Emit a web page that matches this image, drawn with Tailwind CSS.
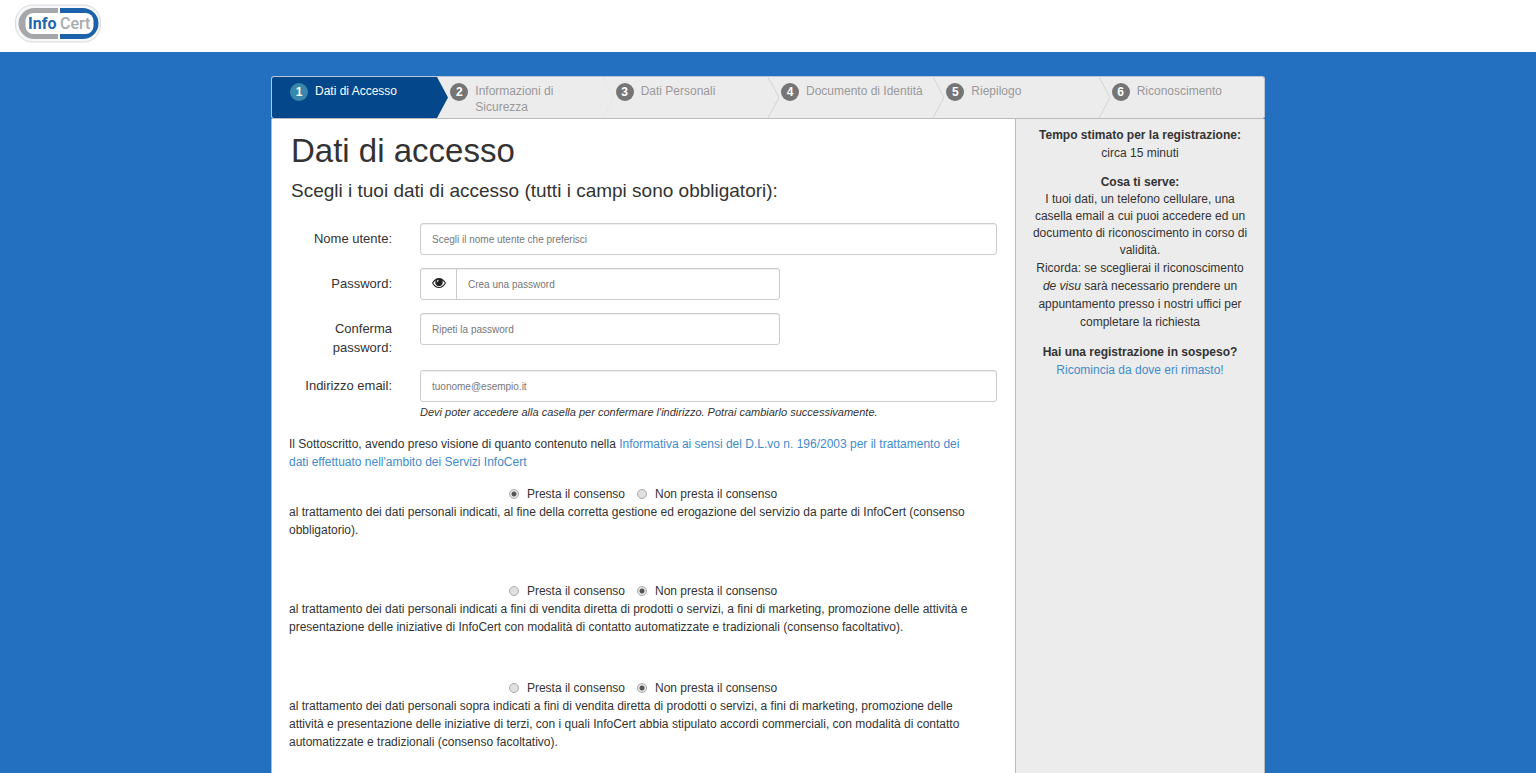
<!DOCTYPE html>
<html lang="it">
<head>
<meta charset="utf-8">
<meta name="viewport" content="width=device-width, initial-scale=1">
<title>InfoCert - Dati di accesso</title>
<script src="https://cdn.jsdelivr.net/npm/@tailwindcss/browser@4"></script>
</head>
<body class="flex min-h-screen flex-col overflow-x-hidden bg-[#2370c1] font-['Liberation_Sans',Arial,sans-serif] text-[#333]">
<header class="flex h-[52px] items-start bg-white px-[14px] pt-1">
  <a href="#" aria-label="InfoCert">
    <svg class="h-[39px] w-[88px]" viewBox="0 0 88 39">
      <rect x="1.500" y="1" width="85" height="37" rx="17" fill="#f6f7f8" stroke="#d9dadc"/>
      <path d="M44 4H20.500a16 15.500 0 0 0 0 31H44z" fill="#a5a7aa"/>
      <path d="M46 4h22.500a16 15.500 0 0 1 0 31H46z" fill="#1b62aa"/>
      <rect x="11.500" y="9" width="68" height="21" rx="8" fill="#fff"/>
      <rect x="44" y="4" width="2" height="31" fill="#fff"/>
      <text x="14" y="25" font-family="Roboto, sans-serif" font-size="16" font-weight="700" fill="#1f68b0">Info</text>
      <text x="46" y="25" font-family="Roboto, sans-serif" font-size="16" font-weight="500" fill="#a9abae">Cert</text>
    </svg>
  </a>
</header>

<main class="mx-auto mt-6 flex w-full max-w-[994px] grow flex-col">
  <ol class="grid h-[43px] grid-cols-6 overflow-hidden rounded-[3px] border border-[#b9c6d6] border-b-[#bbb] bg-[#ececec] text-[12px] leading-4 text-[#999]">
    <li class="relative flex gap-[7px] bg-[#04478b] pt-[6px] pl-[18px] text-white" aria-current="step">
      <span class="flex size-[18px] shrink-0 items-center justify-center rounded-full bg-[#3a87ad] text-[12px] font-bold">1</span>
      <span>Dati di Accesso</span>
      <svg class="absolute top-0 left-full z-10 h-full w-[11px]" viewBox="0 0 11 41" preserveAspectRatio="none"><path d="M0 0 11 20.500 0 41z" fill="#04478b"/></svg>
    </li>
    <li class="relative flex gap-[7px] pt-[6px] pl-[13px]">
      <span class="flex size-[18px] shrink-0 items-center justify-center rounded-full bg-[#757575] text-[12px] font-bold text-white">2</span>
      <span class="w-24">Informazioni di Sicurezza</span>
      <svg class="absolute top-0 left-full z-10 h-full w-[11px]" viewBox="0 0 11 41" preserveAspectRatio="none"><path d="M0 0 11 20.500 0 41" fill="none" stroke="#e6e6e6"/></svg>
    </li>
    <li class="relative flex gap-[7px] pt-[6px] pl-[13px]">
      <span class="flex size-[18px] shrink-0 items-center justify-center rounded-full bg-[#757575] text-[12px] font-bold text-white">3</span>
      <span>Dati Personali</span>
      <svg class="absolute top-0 left-full z-10 h-full w-[11px]" viewBox="0 0 11 41" preserveAspectRatio="none"><path d="M0 0 11 20.500 0 41" fill="none" stroke="#d4d4d4"/></svg>
    </li>
    <li class="relative flex gap-[7px] pt-[6px] pl-[13px]">
      <span class="flex size-[18px] shrink-0 items-center justify-center rounded-full bg-[#757575] text-[12px] font-bold text-white">4</span>
      <span class="whitespace-nowrap">Documento di Identità</span>
      <svg class="absolute top-0 left-full z-10 h-full w-[11px]" viewBox="0 0 11 41" preserveAspectRatio="none"><path d="M0 0 11 20.500 0 41" fill="none" stroke="#d4d4d4"/></svg>
    </li>
    <li class="relative flex gap-[7px] pt-[6px] pl-[13px]">
      <span class="flex size-[18px] shrink-0 items-center justify-center rounded-full bg-[#757575] text-[12px] font-bold text-white">5</span>
      <span>Riepilogo</span>
      <svg class="absolute top-0 left-full z-10 h-full w-[11px]" viewBox="0 0 11 41" preserveAspectRatio="none"><path d="M0 0 11 20.500 0 41" fill="none" stroke="#d4d4d4"/></svg>
    </li>
    <li class="relative flex gap-[7px] pt-[6px] pl-[13px]">
      <span class="flex size-[18px] shrink-0 items-center justify-center rounded-full bg-[#757575] text-[12px] font-bold text-white">6</span>
      <span>Riconoscimento</span>
    </li>
  </ol>

  <div class="flex grow border-x border-[#bbb] bg-white">
    <form class="min-w-0 flex-1 pt-3 pr-[18px] pb-6 pl-[17px]">
      <h1 class="pl-[2px] text-[33px] leading-10">Dati di accesso</h1>
      <h2 class="mt-2 pl-[2px] text-[19px] leading-6">Scegli i tuoi dati di accesso (tutti i campi sono obbligatori):</h2>

      <div class="mt-5 grid grid-cols-[103px_1fr] gap-x-7 text-[13px]">
        <label for="user" class="pt-[7px] text-right leading-[18px]">Nome utente:</label>
        <input id="user" type="text" placeholder="Scegli il nome utente che preferisci" class="h-8 rounded-[3px] border border-[#ccc] px-[11px] text-[10px] shadow-[inset_0_1px_1px_#00000013] placeholder:text-[#777]">

        <label for="pwd" class="mt-[13px] pt-[7px] text-right leading-[18px]">Password:</label>
        <div class="mt-[13px] flex h-8 w-[360px] rounded-[3px] border border-[#ccc] shadow-[inset_0_1px_1px_#00000013]">
          <button type="button" aria-label="Mostra password" class="flex w-9 items-center justify-center border-r border-[#ccc] pb-[2px]">
            <svg class="h-[10px] w-[14px]" viewBox="0 0 14 10"><path fill-rule="evenodd" d="M7 0C4 0 1.500 2 0 5c1.500 3 4 5 7 5s5.500-2 7-5C12.500 2 10 0 7 0zM3.700 2.400A4 4 0 0 0 7 8.300a4 4 0 0 0 3.300-5.900C11.400 3 12.200 4 12.800 5 11.500 7.400 9.500 8.900 7 8.900S2.500 7.400 1.200 5c.6-1 1.400-2 2.500-2.600zM6.500 1.800a2 2 0 0 0-1.700 2.400l.9-.2c-.1-.8.3-1.300 1-1.400z" fill="#222"/></svg>
          </button>
          <input id="pwd" type="password" placeholder="Crea una password" class="min-w-0 flex-1 px-[11px] text-[10px] placeholder:text-[#777]">
        </div>

        <label for="pwd2" class="mt-[13px] pt-[6px] text-right leading-[19px]">Conferma<br>password:</label>
        <input id="pwd2" type="password" placeholder="Ripeti la password" class="mt-[13px] h-8 w-[360px] rounded-[3px] border border-[#ccc] px-[11px] text-[10px] shadow-[inset_0_1px_1px_#00000013] placeholder:text-[#777]">

        <label for="mail" class="mt-[13px] pt-[7px] text-right leading-[18px]">Indirizzo email:</label>
        <div class="mt-[13px]">
          <input id="mail" type="email" placeholder="tuonome@esempio.it" class="block h-8 w-full rounded-[3px] border border-[#ccc] px-[11px] text-[10px] shadow-[inset_0_1px_1px_#00000013] placeholder:text-[#777]">
          <p class="mt-[3px] text-[11px] leading-[14px] italic">Devi poter accedere alla casella per confermare l'indirizzo. Potrai cambiarlo successivamente.</p>
        </div>
      </div>

      <div class="mt-4 text-[12px] leading-[18px]">
        <p>Il Sottoscritto, avendo preso visione di quanto contenuto nella <a href="#" class="text-[#428bca]">Informativa ai sensi del D.L.vo n. 196/2003 per il trattamento dei<br>dati effettuato nell'ambito dei Servizi InfoCert</a></p>

        <fieldset class="mt-[14px]">
          <div class="flex justify-center gap-3">
            <label class="flex items-center gap-2"><input type="radio" name="c1" checked class="size-[10px] appearance-none rounded-full border border-[#aaa] bg-[#e8e8e8] checked:bg-[radial-gradient(circle,#555_2px,#e8e8e8_3px)]">Presta il consenso</label>
            <label class="flex items-center gap-2"><input type="radio" name="c1" class="size-[10px] appearance-none rounded-full border border-[#aaa] bg-[#e0e0e0] checked:bg-[radial-gradient(circle,#555_2px,#e8e8e8_3px)]">Non presta il consenso</label>
          </div>
          <p>al trattamento dei dati personali indicati, al fine della corretta gestione ed erogazione del servizio da parte di InfoCert (consenso<br>obbligatorio).</p>
        </fieldset>
        <fieldset class="mt-[43px]">
          <div class="flex justify-center gap-3">
            <label class="flex items-center gap-2"><input type="radio" name="c2" class="size-[10px] appearance-none rounded-full border border-[#aaa] bg-[#e0e0e0] checked:bg-[radial-gradient(circle,#555_2px,#e8e8e8_3px)]">Presta il consenso</label>
            <label class="flex items-center gap-2"><input type="radio" name="c2" checked class="size-[10px] appearance-none rounded-full border border-[#aaa] bg-[#e8e8e8] checked:bg-[radial-gradient(circle,#555_2px,#e8e8e8_3px)]">Non presta il consenso</label>
          </div>
          <p>al trattamento dei dati personali indicati a fini di vendita diretta di prodotti o servizi, a fini di marketing, promozione delle attività e<br>presentazione delle iniziative di InfoCert con modalità di contatto automatizzate e tradizionali (consenso facoltativo).</p>
        </fieldset>
        <fieldset class="mt-[43px]">
          <div class="flex justify-center gap-3">
            <label class="flex items-center gap-2"><input type="radio" name="c3" class="size-[10px] appearance-none rounded-full border border-[#aaa] bg-[#e0e0e0] checked:bg-[radial-gradient(circle,#555_2px,#e8e8e8_3px)]">Presta il consenso</label>
            <label class="flex items-center gap-2"><input type="radio" name="c3" checked class="size-[10px] appearance-none rounded-full border border-[#aaa] bg-[#e8e8e8] checked:bg-[radial-gradient(circle,#555_2px,#e8e8e8_3px)]">Non presta il consenso</label>
          </div>
          <p>al trattamento dei dati personali sopra indicati a fini di vendita diretta di prodotti o servizi, a fini di marketing, promozione delle<br>attività e presentazione delle iniziative di terzi, con i quali InfoCert abbia stipulato accordi commerciali, con modalità di contatto<br>automatizzate e tradizionali (consenso facoltativo).</p>
        </fieldset>
      </div>
    </form>

    <aside class="w-[249px] shrink-0 border-l border-[#bbb] bg-[#ececec] px-3 pt-[7px] text-center text-[12px] leading-[18px]">
      <p><b>Tempo stimato per la registrazione:</b><br>circa 15 minuti</p>
      <p class="mt-3 leading-[17px]"><b>Cosa ti serve:</b><br>I tuoi dati, un telefono cellulare, una<br>casella email a cui puoi accedere ed un<br>documento di riconoscimento in corso di<br>validità.</p>
      <p>Ricorda: se sceglierai il riconoscimento<br><i>de visu</i> sarà necessario prendere un<br>appuntamento presso i nostri uffici per<br>completare la richiesta</p>
      <p class="mt-3"><b>Hai una registrazione in sospeso?</b><br><a href="#" class="text-[#428bca]">Ricomincia da dove eri rimasto!</a></p>
    </aside>
  </div>
</main>
</body>
</html>
